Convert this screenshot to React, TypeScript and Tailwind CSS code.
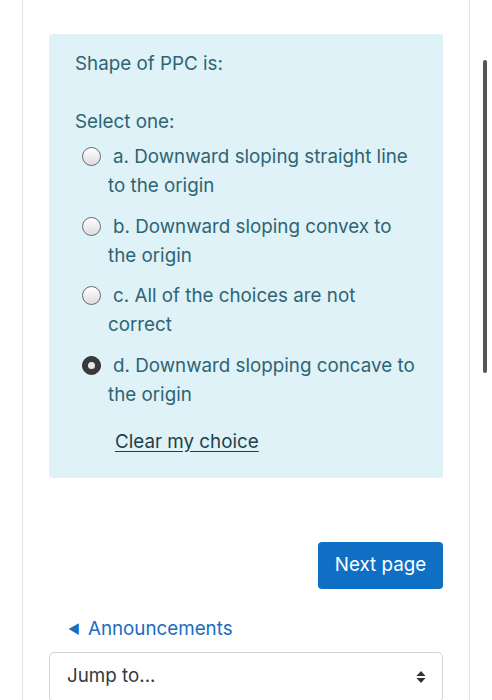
import React from 'react';

const options = [
  { id: 'a', first: 'a. Downward sloping straight line', rest: 'to the origin' },
  { id: 'b', first: 'b. Downward sloping convex to', rest: 'the origin' },
  { id: 'c', first: 'c. All of the choices are not', rest: 'correct' },
  { id: 'd', first: 'd. Downward slopping concave to', rest: 'the origin' },
];

function Radio({ checked }: { checked: boolean }) {
  if (checked) {
    return (
      <span className="w-[19px] h-[19px] rounded-full bg-[#3a3a3a] border border-[#2a2a2a] flex items-center justify-center shrink-0">
        <span className="w-[7px] h-[7px] rounded-full bg-[#e8e8e8]" />
      </span>
    );
  }
  return (
    <span className="w-[19px] h-[19px] rounded-full border-[1.5px] border-[#6b6b6b] bg-gradient-to-b from-[#ffffff] to-[#dcdcdc] shrink-0" />
  );
}

export default function App() {
  const selected = 'd';
  return (
    <div className="w-[492px] h-[700px] bg-white overflow-hidden relative" style={{ fontFamily: 'Inter, "Noto Sans", sans-serif' }}>
      <div className="ml-[22px] w-[448px] h-full border-x border-[#e3e3e3] pt-[34px] px-[26px]">
        {/* Question box */}
        <div className="bg-[#def2f8] rounded-[3px] text-[#2f6473] text-[18.8px] pl-[26px] pr-4 pt-[16px] pb-[22px]">
          <p className="leading-[28px]">Shape of PPC is:</p>
          <p className="leading-[28px] mt-[30px]">Select one:</p>
          <div className="mt-[6px] flex flex-col gap-[11.5px]">
            {options.map((o) => (
              <div key={o.id} className="pl-[7px]">
                <div className="flex items-center gap-[12px] leading-[29px]">
                  <Radio checked={o.id === selected} />
                  <span>{o.first}</span>
                </div>
                <div className="pl-[26px] leading-[29px]">{o.rest}</div>
              </div>
            ))}
          </div>
          <div className="mt-[19px] pl-[40px] leading-[28px]">
            <span className="underline underline-offset-[3px] text-[#1f3f4a]">Clear my choice</span>
          </div>
        </div>

        {/* Next page */}
        <div className="flex justify-end mt-[64px]">
          <button className="bg-[#0f6fc5] text-white text-[18.8px] rounded-[4px] w-[125px] h-[47px]">Next page</button>
        </div>

        {/* Announcements */}
        <div className="mt-[28px] pl-[19px] flex items-center gap-[8px] text-[#1a6cbf] text-[18.8px] leading-[24px]">
          <span className="text-[13px]">◀</span>
          <span>Announcements</span>
        </div>

        {/* Jump to */}
        <div className="mt-[11px] h-[50px] border border-[#cfd4d8] rounded-[5px] flex items-center justify-between pl-[17px] pr-[16px] text-[18.8px] text-[#343a40]">
          <span>Jump to...</span>
          <svg width="10" height="14" viewBox="0 0 10 14">
            <path d="M5 1 L9.5 6 H0.5 Z" fill="#333" />
            <path d="M5 13 L9.5 8 H0.5 Z" fill="#333" />
          </svg>
        </div>
      </div>

      {/* scrollbar overlay */}
      <div className="absolute left-[483px] top-[60px] w-[4px] h-[313px] rounded-full bg-[#555]" />
    </div>
  );
}
